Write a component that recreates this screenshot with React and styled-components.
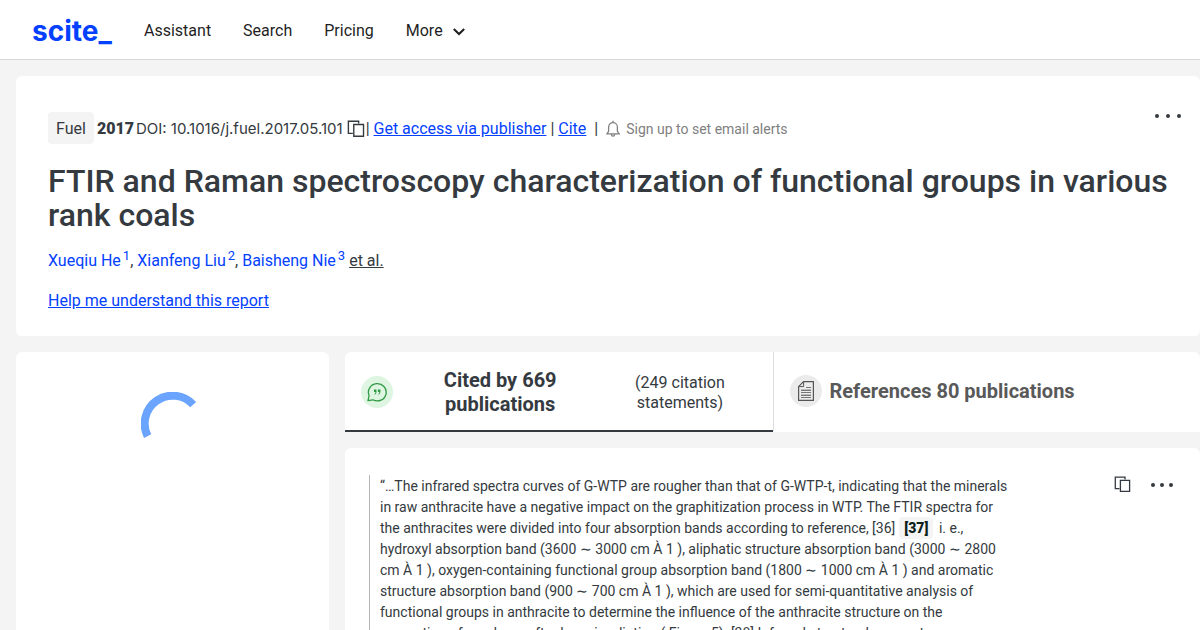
import React from 'react';
import styled, { createGlobalStyle, css } from 'styled-components';

const GlobalStyle = createGlobalStyle`
  * {
    box-sizing: border-box;
  }

  body {
    margin: 0;
    background: #f4f4f4;
    color: #343a40;
    font-family: Roboto, "Liberation Sans", sans-serif;
    font-size: 16px;
    line-height: 20px;
  }
`;

const card = css`
  background: #fff;
  border-radius: 6px;
`;

const resetButton = css`
  border: 0;
  padding: 0;
  background: none;
  color: inherit;
  font: inherit;
  cursor: pointer;
`;

const Header = styled.header`
  display: flex;
  align-items: center;
  gap: 32px;
  height: 60px;
  padding: 2px 32px 0;
  background: #fff;
  border-bottom: 1px solid #d8d8d8;
`;

const Logo = styled.a`
  width: 80px;
  color: #0341ff;
  font-family: Inter, sans-serif;
  font-size: 28px;
  font-weight: 700;
  line-height: 32px;
  text-decoration: none;
`;

const Nav = styled.nav`
  display: flex;
  align-items: center;
  gap: 32px;
`;

const NavLink = styled.a`
  color: #1f1f1f;
  text-decoration: none;
`;

const NavButton = styled.button`
  ${resetButton};
  display: flex;
  align-items: center;
  gap: 8px;
  color: #1f1f1f;
`;

const Page = styled.main`
  display: flex;
  flex-direction: column;
  gap: 16px;
  padding: 16px 0 0 16px;
`;

const ReportCard = styled.section`
  ${card};
  padding: 36px 16px 25px 32px;
`;

const MetaRow = styled.div`
  display: flex;
  align-items: center;
  height: 32px;
  padding-top: 2px;
  white-space: nowrap;
`;

const Journal = styled.span`
  margin: 0 3px 2px 0;
  padding: 7px 8px 5px;
  border-radius: 4px;
  background: #f4f4f4;
`;

const Year = styled.strong`
  margin-right: 2px;
  font-weight: 900;
`;

const Doi = styled.span`
  margin-right: 4px;
  font-family: Inter, sans-serif;
  font-size: 15px;
`;

const Separator = styled.span`
  margin: 0 4px;
`;

const Link = styled.a`
  color: #0341ff;
`;

const IconButton = styled.button`
  ${resetButton};
  display: flex;
  align-items: center;
  justify-content: center;
`;

const CopyDoiButton = styled(IconButton)`
  & + ${Separator} {
    margin-left: 1px;
  }
`;

const AlertButton = styled.button`
  ${resetButton};
  display: flex;
  align-items: center;
  gap: 6px;
  margin-left: 4px;
  color: #808080;
  font-size: 14px;
`;

const MenuButton = styled(IconButton)`
  width: 32px;
  height: 24px;
  margin-left: auto;
  align-self: flex-start;
  margin-top: -10px;
`;

const Title = styled.h1`
  margin: 20px 0 19px;
  font-size: 32px;
  font-weight: 500;
  line-height: 34px;
`;

const Authors = styled.p`
  margin: 0 0 20px;

  a {
    text-decoration: none;
  }

  sup {
    margin-left: 2px;
    font-size: 13px;
    line-height: 0;
  }
`;

const MoreAuthors = styled.button`
  ${resetButton};
  text-decoration: underline;
`;

const Columns = styled.div`
  display: grid;
  grid-template-columns: 313px 1fr;
  gap: 16px;
`;

const Sidebar = styled.aside`
  ${card};
  display: flex;
  justify-content: center;
  padding-top: 40px;
`;

const Content = styled.div`
  display: flex;
  flex-direction: column;
  gap: 16px;
`;

const Tabs = styled.div`
  display: grid;
  grid-template-columns: 1fr 1fr;
  overflow: hidden;
  border-radius: 6px 6px 0 0;
  background: #fff;
`;

const Tab = styled.button`
  ${resetButton};
  display: flex;
  align-items: center;
  gap: 8px;
  min-height: 80px;
  padding: ${({ $active }) => ($active ? '2px 10px 0 16px' : '0 16px')};
  color: ${({ $active }) => ($active ? '#343a40' : '#595959')};
  border-bottom: 2px solid ${({ $active }) => ($active ? '#343a40' : 'transparent')};

  & + & {
    border-left: 1px solid #dedede;
  }
`;

const TabIcon = styled.span`
  display: flex;
  flex: none;
  align-items: center;
  justify-content: center;
  width: 32px;
  height: 32px;
  border-radius: 50%;
  background: ${({ $color }) => $color};
`;

const TabTitle = styled.span`
  font-size: 20px;
  font-weight: 700;
  line-height: 24px;
`;

const TabText = styled.span`
  display: flex;
  flex: 1;
  padding-left: 2px;
  text-align: center;

  ${TabTitle} {
    flex: 5;
    padding: 0 24px;
  }
`;

const Statements = styled.span`
  flex: 4;
  align-self: center;
  padding: 2px 24px 0;
`;

const CitationCard = styled.article`
  ${card};
  display: flex;
  align-items: flex-start;
  justify-content: space-between;
  padding: 27px 27px 27px 24px;
`;

const Quote = styled.blockquote`
  margin: 0;
  padding: 1px 0 0 10px;
  border-left: 1px solid #b4b4b4;
  font-size: 14px;
  line-height: 21px;
`;

const Line = styled.span`
  display: block;
  white-space: nowrap;
`;

const Reference = styled.strong`
  margin: 0 2px 0 4px;
  padding: 3px 5px;
  border-radius: 4px;
  background: #f4f4f4;
  color: #0f1f1c;
  font-weight: 900;
`;

const Actions = styled.div`
  display: flex;
  align-items: center;
  gap: 20px;
  padding-top: 1px;
`;

const ChevronIcon = () => (
  <svg width="16" height="16" viewBox="0 0 16 16" fill="none" stroke="currentColor" strokeWidth="2" aria-hidden="true">
    <path d="M2.8 6l5.2 5 5.2-5" />
  </svg>
);

const CopyIcon = ({ size = 17 }) => (
  <svg width={size} height={size} viewBox="0 0 17 17" fill="none" stroke="currentColor" strokeWidth="1.3" aria-hidden="true">
    <path d="M11 3.4V1.2H1.3v11.4h4.2" />
    <path d="M6.4 4.3h9.2v11H6.4z" />
  </svg>
);

const BellIcon = () => (
  <svg width="14" height="18" viewBox="0 0 14 18" fill="none" stroke="currentColor" strokeWidth="1.3" aria-hidden="true">
    <path d="M7 .8v1.6M2.6 11.4V7a4.4 4.4 0 0 1 8.8 0v4.4l1.7 2.5H.9l1.7-2.5M5.4 14.5a1.6 1.6 0 0 0 3.2 0" />
  </svg>
);

const DotsIcon = ({ width = 26, radius = 2 }) => (
  <svg width={width} height="6" viewBox={`0 0 ${width} 6`} fill="currentColor" aria-hidden="true">
    <circle cx={radius} cy="3" r={radius} />
    <circle cx={width / 2} cy="3" r={radius} />
    <circle cx={width - radius} cy="3" r={radius} />
  </svg>
);

const QuoteIcon = () => (
  <svg width="20" height="20" viewBox="0 0 20 20" fill="none" stroke="#2f9a43" strokeWidth="1.3" aria-hidden="true">
    <path d="M2.1 13.6A8.9 8.6 0 1 1 6 17.8l-5 .9z" strokeLinejoin="round" />
    <g fill="#2f9a43" stroke="none">
      <path d="M7 7.4h2.5v2.4c0 1.5-.8 2.6-2 3v-.9c.6-.3 1-.9 1-1.8H7z" />
      <path d="M10.9 7.4h2.5v2.4c0 1.5-.8 2.6-2 3v-.9c.6-.3 1-.9 1-1.8h-1.5z" />
    </g>
  </svg>
);

const DocumentIcon = () => (
  <svg width="16" height="20" viewBox="0 0 16 20" fill="none" stroke="#555" aria-hidden="true">
    <path d="M5.5.6h9.9v18.8H.6V5.6z" strokeWidth="1.2" strokeLinejoin="round" />
    <path d="M5.6.6v5H.6" />
    <path d="M8 6.5h5M3 9.5h10M3 11.5h10M3 14.5h10M3 16.5h10" stroke="#777" />
    <path d="M3 8.5h10M3 13.5h10" stroke="#bbb" />
  </svg>
);

const Spinner = () => (
  <svg width="64" height="64" viewBox="0 0 64 64" fill="none" role="img" aria-label="Loading">
    <path d="M6.6 44.1A28 28 0 0 1 52.2 12.6" stroke="#6ba4ff" strokeWidth="8" />
  </svg>
);

const authors = ['Xueqiu He', 'Xianfeng Liu', 'Baisheng Nie'];

const lines = [
  '“…The infrared spectra curves of G-WTP are rougher than that of G-WTP-t, indicating that the minerals',
  'in raw anthracite have a negative impact on the graphitization process in WTP. The FTIR spectra for',
  <>the anthracites were divided into four absorption bands according to reference, [36]<Reference>[37]</Reference> i. e.,</>,
  'hydroxyl absorption band (3600 ∼ 3000 cm À 1 ), aliphatic structure absorption band (3000 ∼ 2800',
  'cm À 1 ), oxygen-containing functional group absorption band (1800 ∼ 1000 cm À 1 ) and aromatic',
  'structure absorption band (900 ∼ 700 cm À 1 ), which are used for semi-quantitative analysis of',
  'functional groups in anthracite to determine the influence of the anthracite structure on the',
  'generation of graphene after laser irradiation ( Figure 5). [38] Infrared structural parameters',
];

export default function App() {
  return (
    <>
      <GlobalStyle />
      <Header>
        <Logo href="#">scite_</Logo>
        <Nav>
          <NavLink href="#assistant">Assistant</NavLink>
          <NavLink href="#search">Search</NavLink>
          <NavLink href="#pricing">Pricing</NavLink>
          <NavButton type="button">More <ChevronIcon /></NavButton>
        </Nav>
      </Header>
      <Page>
        <ReportCard>
          <MetaRow>
            <Journal>Fuel</Journal>
            <Year>2017</Year>
            <Doi>DOI: 10.1016/j.fuel.2017.05.101</Doi>
            <CopyDoiButton type="button" aria-label="Copy DOI"><CopyIcon size={18} /></CopyDoiButton>
            <Separator>|</Separator>
            <Link href="#publisher">Get access via publisher</Link>
            <Separator>|</Separator>
            <Link href="#cite">Cite</Link>
            <Separator>&nbsp;|</Separator>
            <AlertButton type="button"><BellIcon /> Sign up to set email alerts</AlertButton>
            <MenuButton type="button" aria-label="Report options"><DotsIcon /></MenuButton>
          </MetaRow>
          <Title>FTIR and Raman spectroscopy characterization of functional groups in various rank coals</Title>
          <Authors>
            {authors.map((name, i) => (
              <React.Fragment key={name}>
                <Link href="#author">{name}<sup>{i + 1}</sup></Link>
                {i < authors.length - 1 ? ', ' : ' '}
              </React.Fragment>
            ))}
            <MoreAuthors type="button">et al.</MoreAuthors>
          </Authors>
          <Link href="#help">Help me understand this report</Link>
        </ReportCard>
        <Columns>
          <Sidebar><Spinner /></Sidebar>
          <Content>
            <Tabs role="tablist">
              <Tab type="button" role="tab" aria-selected="true" $active>
                <TabIcon $color="#def5e2"><QuoteIcon /></TabIcon>
                <TabText>
                  <TabTitle>Cited by 669 publications</TabTitle>
                  <Statements>(249 citation statements)</Statements>
                </TabText>
              </Tab>
              <Tab type="button" role="tab" aria-selected="false">
                <TabIcon $color="#ebebeb"><DocumentIcon /></TabIcon>
                <TabTitle>References 80 publications</TabTitle>
              </Tab>
            </Tabs>
            <CitationCard>
              <Quote>
                {lines.map((line, i) => <Line key={i}>{line}</Line>)}
              </Quote>
              <Actions>
                <IconButton type="button" aria-label="Copy citation"><CopyIcon /></IconButton>
                <IconButton type="button" aria-label="Citation options"><DotsIcon width={22} /></IconButton>
              </Actions>
            </CitationCard>
          </Content>
        </Columns>
      </Page>
    </>
  );
}
